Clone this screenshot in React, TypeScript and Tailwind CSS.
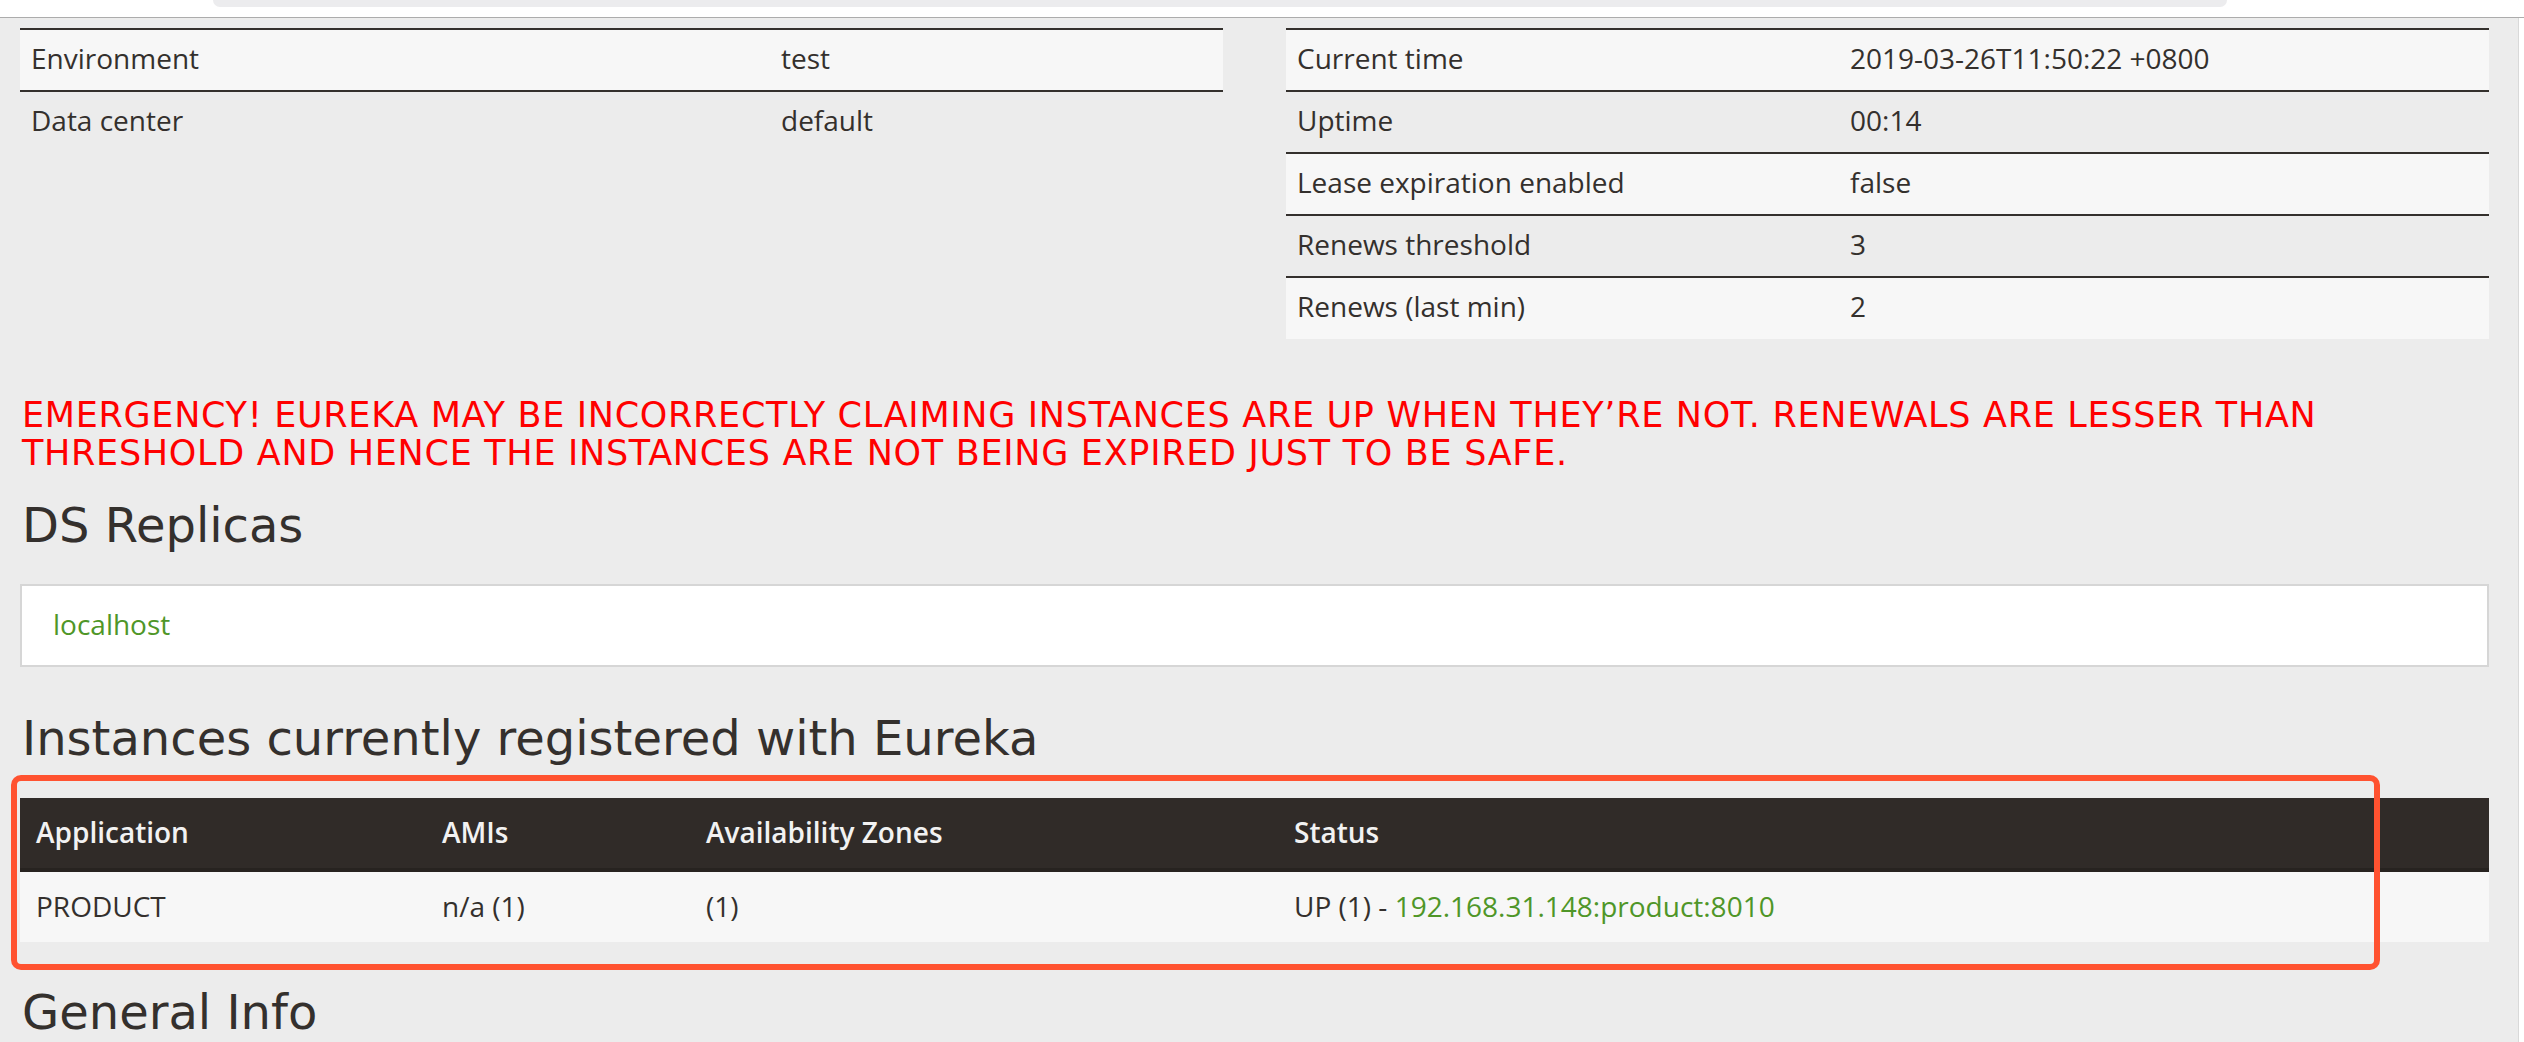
import React from 'react';

interface InfoRow {
  label: string;
  value: string;
}

const envRows: InfoRow[] = [
  { label: 'Environment', value: 'test' },
  { label: 'Data center', value: 'default' },
];

const statusRows: InfoRow[] = [
  { label: 'Current time', value: '2019-03-26T11:50:22 +0800' },
  { label: 'Uptime', value: '00:14' },
  { label: 'Lease expiration enabled', value: 'false' },
  { label: 'Renews threshold', value: '3' },
  { label: 'Renews (last min)', value: '2' },
];

const bodyFont = "font-['Open_Sans','Noto_Sans',sans-serif]";
const headFont = "font-['DejaVu_Sans','Noto_Sans',sans-serif]";

function InfoTable({ rows, labelWidth }: { rows: InfoRow[]; labelWidth: string }) {
  return (
    <table className={`w-full border-collapse text-[28px] text-[#34302d] ${bodyFont}`}>
      <tbody>
        {rows.map((row, i) => (
          <tr
            key={row.label}
            className={`h-[62px] border-t-2 border-[#34302d] ${i % 2 === 0 ? 'bg-[#f7f7f7]' : ''}`}
          >
            <td className={`${labelWidth} pl-[11px] pb-[5px] align-middle leading-[38px]`}>{row.label}</td>
            <td className="pl-[11px] pb-[5px] align-middle leading-[38px]">{row.value}</td>
          </tr>
        ))}
      </tbody>
    </table>
  );
}

export default function App() {
  return (
    <div className="w-[2524px] h-[1042px] overflow-hidden bg-[#ececec] flex flex-col">
      {/* browser chrome remnant */}
      <div className="h-[18px] bg-white border-b border-[#acacac] flex pl-[213px] shrink-0">
        <div className="w-[2014px] h-[7px] bg-[#ececee] rounded-b-[14px]" />
      </div>

      <div className="flex flex-1">
        <div className="flex-1 pl-[20px] pr-[29px]">
          {/* Status tables */}
          <div className="flex gap-[63px] mt-[10px] items-start">
            <div className="flex-1">
              <InfoTable rows={envRows} labelWidth="w-[750px]" />
            </div>
            <div className="flex-1">
              <InfoTable rows={statusRows} labelWidth="w-[553px]" />
            </div>
          </div>

          {/* Emergency banner */}
          <p
            className={`mt-[57px] pl-[2px] text-[35px] leading-[38px] tracking-[0.7px] text-[#ff0000] uppercase ${headFont}`}
          >
            EMERGENCY! EUREKA MAY BE INCORRECTLY CLAIMING INSTANCES ARE UP WHEN THEY’RE NOT. RENEWALS ARE
            LESSER THAN THRESHOLD AND HENCE THE INSTANCES ARE NOT BEING EXPIRED JUST TO BE SAFE.
          </p>

          <h2 className={`mt-[28px] pl-[2px] text-[48px] leading-[50px] text-[#34302d] ${headFont}`}>
            DS Replicas
          </h2>

          <div className="mt-[34px] h-[83px] bg-white border-2 border-[#d6d6d6] flex items-center pl-[31px] pb-[4px]">
            <a className={`text-[28px] leading-[38px] text-[#4f9628] ${bodyFont}`}>localhost</a>
          </div>

          <h2 className={`mt-[46px] pl-[2px] text-[48px] leading-[50px] text-[#34302d] ${headFont}`}>
            Instances currently registered with Eureka
          </h2>

          {/* Instances table with annotation box */}
          <div className="relative mt-[35px]">
            <table className={`w-full border-collapse text-[28px] ${bodyFont}`}>
              <thead>
                <tr className="h-[72px] bg-[#302b28] border-b-4 border-[#272320] text-[#f2f2f2]">
                  <th className="w-[406px] pl-[16px] pb-[3px] text-left font-semibold">Application</th>
                  <th className="w-[264px] pl-[16px] pb-[3px] text-left font-semibold">AMIs</th>
                  <th className="w-[588px] pl-[16px] pb-[3px] text-left font-semibold">Availability Zones</th>
                  <th className="pl-[16px] pb-[3px] text-left font-semibold">Status</th>
                </tr>
              </thead>
              <tbody>
                <tr className="h-[72px] bg-[#f7f7f7] text-[#34302d]">
                  <td className="pl-[16px] pb-[3px]">PRODUCT</td>
                  <td className="pl-[16px] pb-[3px]">n/a (1)</td>
                  <td className="pl-[16px] pb-[3px]">(1)</td>
                  <td className="pl-[16px] pb-[3px]">
                    UP (1) - <a className="text-[#4f9628]">192.168.31.148:product:8010</a>
                  </td>
                </tr>
              </tbody>
            </table>
            <div className="absolute top-[-23px] left-[-9px] w-[2369px] h-[195px] border-[6px] border-[#ff5230] rounded-[10px] pointer-events-none" />
          </div>

          <h2 className={`mt-[45px] pl-[2px] text-[48px] leading-[50px] text-[#34302d] ${headFont}`}>
            General Info
          </h2>
        </div>

        {/* scrollbar gutter */}
        <div className="w-[6px] border-l border-[#d9d9d9] bg-white" />
      </div>
    </div>
  );
}
